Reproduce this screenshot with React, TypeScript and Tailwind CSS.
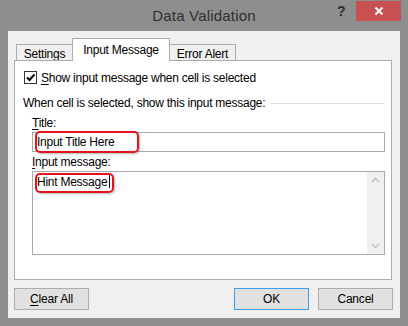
import React from 'react';

const FONT = "font-['Liberation_Sans','Noto_Sans',sans-serif]";

function Underlined({ first, rest }: { first: string; rest: string }) {
  return (
    <span>
      <span className="underline underline-offset-2">{first}</span>
      {rest}
    </span>
  );
}

function Button({ children, primary = false }: { children: React.ReactNode; primary?: boolean }) {
  return (
    <div
      className={`w-[75px] h-[22px] flex items-center justify-center text-[12px] tracking-[-0.2px] text-black bg-[#e1e1e1] border ${
        primary ? 'border-[#3c9cf0]' : 'border-[#adadad]'
      }`}
    >
      {children}
    </div>
  );
}

export default function App() {
  return (
    <div className={`w-[408px] h-[326px] bg-[#8e8e8e] flex flex-col ${FONT}`}>
      {/* ── Title bar ── */}
      <div className="h-[31px] grid grid-cols-[1fr_auto_1fr]">
        <div />
        <div className="pt-[5px] text-[15px] text-[#2e2e2e] tracking-[0.2px]">Data Validation</div>
        <div className="flex justify-end items-start pr-[7px]">
          <div className="w-[14px] mt-[4px] mr-[5px] text-[14px] font-bold text-[#2b2b2b] leading-none">?</div>
          <div className="w-[45px] h-[20px] mt-[1px] bg-[#c75050] flex items-center justify-center">
            <svg width="10" height="10" viewBox="0 0 10 10">
              <path d="M1.5 1.5 L8.5 8.5 M8.5 1.5 L1.5 8.5" stroke="#fff" strokeWidth="1.9" />
            </svg>
          </div>
        </div>
      </div>

      {/* ── Client area ── */}
      <div className="ml-[8px] mr-[8px] h-[287px] bg-[#f0f0f0] flex flex-col pl-[6px] pr-[7px] pt-[7px]">
        {/* Tabs */}
        <div className="flex items-end pl-[2px] -mb-px h-[23px] tracking-[-0.25px]">
          <div className="w-[57px] h-[17px] border border-b-0 border-[#acacac] bg-[#f0f0f0] flex items-center justify-center pt-[2px] text-[12px] text-black">
            Settings
          </div>
          <div className="w-[98px] h-[23px] -ml-px border border-b-0 border-[#acacac] bg-white relative z-10 flex items-center justify-center pb-[1px] text-[12px] text-black">
            Input Message
          </div>
          <div className="w-[67px] h-[17px] -ml-px border border-b-0 border-[#acacac] bg-[#f0f0f0] flex items-center justify-center pt-[2px] text-[12px] text-black">
            Error Alert
          </div>
        </div>

        {/* Panel */}
        <div className="h-[220px] mr-[1px] bg-white border border-[#acacac] flex flex-col pt-[10px] text-[12px] tracking-[-0.25px] text-black">
          <div className="h-[13px] flex items-center pl-[9px] gap-[4px]">
            <div className="w-[13px] h-[13px] border border-[#333] bg-white flex items-center justify-center">
              <svg width="11" height="11" viewBox="0 0 11 11">
                <path d="M2 5.5 L4.5 8 L9.5 2.5" stroke="#000" strokeWidth="2" fill="none" />
              </svg>
            </div>
            <span className="leading-none">
              <Underlined first="S" rest="how input message when cell is selected" />
            </span>
          </div>

          <div className="mt-[12px] h-[14px] flex items-center pl-[8px] pr-[7px] gap-[6px]">
            <span className="whitespace-nowrap leading-none">When cell is selected, show this input message:</span>
            <div className="flex-1 h-px bg-[#dcdcdc] mt-[1px]" />
          </div>

          <div className="mt-[6px] h-[14px] flex items-center pl-[17px] leading-none">
            <Underlined first="T" rest="itle:" />
          </div>
          <div className="mt-[2px] ml-[17px] w-[353px] h-[20px] border border-[#a9a9a9] relative flex items-center pl-[4px]">
            <span className="leading-none">Input Title Here</span>
            <div className="absolute left-[2px] top-[-2px] w-[104px] h-[22px] rounded-[5px] border-2 border-[#e5131b] shadow-[1px_1px_2px_rgba(0,0,0,0.3)]" />
          </div>

          <div className="mt-[3px] h-[14px] flex items-center pl-[17px] leading-none">
            <Underlined first="I" rest="nput message:" />
          </div>
          <div className="mt-[2px] ml-[17px] w-[353px] h-[84px] border border-[#a9a9a9] relative flex">
            <div className="flex-1 pl-[4px] pt-[4px] flex items-start">
              <span className="leading-none">Hint Message</span>
              <span className="w-px h-[13px] bg-black ml-[2px] -mt-px relative z-10" />
            </div>
            <div className="absolute left-[2px] top-[1px] w-[79px] h-[20px] rounded-[5px] border-2 border-[#e5131b] shadow-[1px_1px_2px_rgba(0,0,0,0.3)]" />
            <div className="w-[17px] bg-[#f0f0f0] flex flex-col justify-between items-center py-[5px]">
              <svg width="9" height="6" viewBox="0 0 9 6">
                <path d="M1 5 L4.5 1.5 L8 5" stroke="#c2c2c2" strokeWidth="1.5" fill="none" />
              </svg>
              <svg width="9" height="6" viewBox="0 0 9 6">
                <path d="M1 1 L4.5 4.5 L8 1" stroke="#c2c2c2" strokeWidth="1.5" fill="none" />
              </svg>
            </div>
          </div>
        </div>

        {/* Buttons */}
        <div className="mt-[8px] flex items-center">
          <Button>
            <Underlined first="C" rest="lear All" />
          </Button>
          <div className="flex-1" />
          <Button primary>OK</Button>
          <div className="w-[9px]" />
          <Button>Cancel</Button>
        </div>
      </div>
    </div>
  );
}
